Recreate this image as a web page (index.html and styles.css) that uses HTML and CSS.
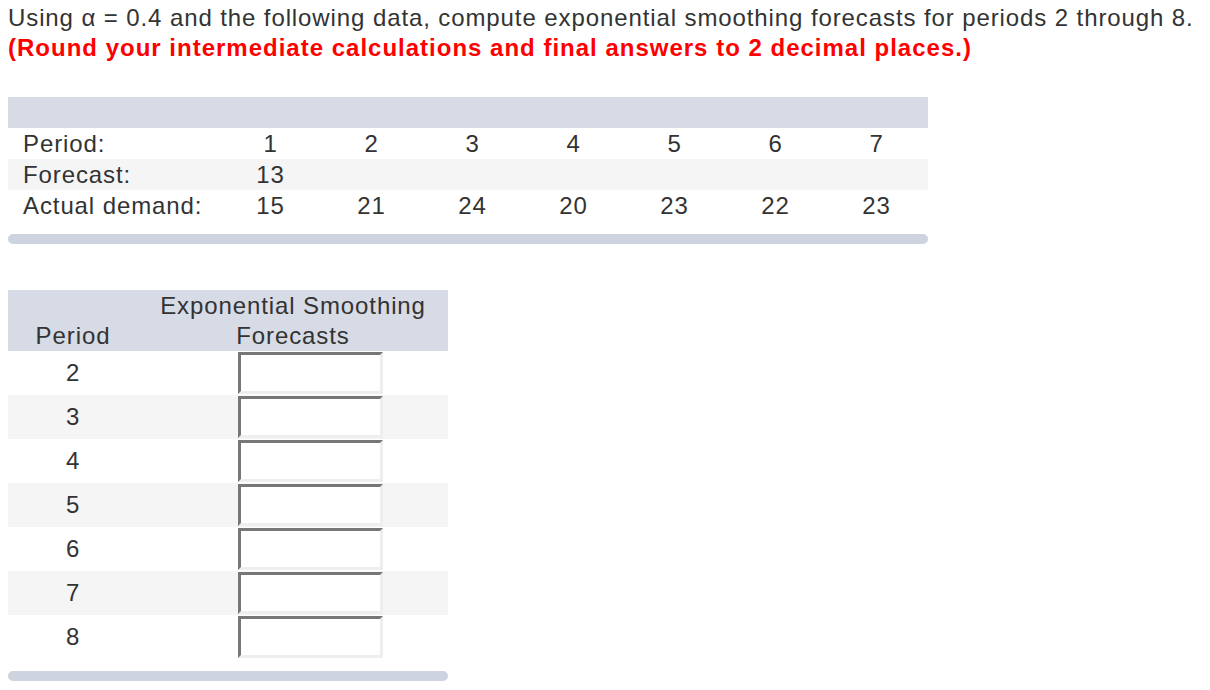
FILE: index.html
```html
<!DOCTYPE html>
<html>
<head>
<meta charset="utf-8">
<link rel="stylesheet" href="styles.css">
</head>
<body>
<div class="question">
  <div class="line">Using α = 0.4 and the following data, compute exponential smoothing forecasts for periods 2 through 8.</div>
  <div class="line red">(Round your intermediate calculations and final answers to 2 decimal places.)</div>
</div>

<div class="data">
  <div class="band"></div>
  <div class="drow">
    <div class="lab">Period:</div>
    <div class="num">1</div><div class="num">2</div><div class="num">3</div><div class="num">4</div><div class="num">5</div><div class="num">6</div><div class="num">7</div>
  </div>
  <div class="drow alt">
    <div class="lab">Forecast:</div>
    <div class="num">13</div><div class="num"></div><div class="num"></div><div class="num"></div><div class="num"></div><div class="num"></div><div class="num"></div>
  </div>
  <div class="drow">
    <div class="lab">Actual demand:</div>
    <div class="num">15</div><div class="num">21</div><div class="num">24</div><div class="num">20</div><div class="num">23</div><div class="num">22</div><div class="num">23</div>
  </div>
  <div class="bar"></div>
</div>

<div class="answers">
  <div class="ahead">
    <div class="pcol">Period</div>
    <div class="fcol">Exponential Smoothing<br>Forecasts</div>
  </div>
  <div class="arow"><div class="pcol">2</div><div class="fcol"><input type="text" class="box"></div></div>
  <div class="arow alt"><div class="pcol">3</div><div class="fcol"><input type="text" class="box"></div></div>
  <div class="arow"><div class="pcol">4</div><div class="fcol"><input type="text" class="box"></div></div>
  <div class="arow alt"><div class="pcol">5</div><div class="fcol"><input type="text" class="box"></div></div>
  <div class="arow"><div class="pcol">6</div><div class="fcol"><input type="text" class="box"></div></div>
  <div class="arow alt"><div class="pcol">7</div><div class="fcol"><input type="text" class="box"></div></div>
  <div class="arow"><div class="pcol">8</div><div class="fcol"><input type="text" class="box"></div></div>
  <div class="bar"></div>
</div>
</body>
</html>
```

FILE: styles.css
```css
html, body {
  margin: 0;
  padding: 0;
  background: #ffffff;
}
body {
  padding: 3px 8px 0 8px;
  font-family: "Liberation Sans", Arial, Helvetica, sans-serif;
  font-size: 24px;
  letter-spacing: 0.9px;
  color: #333333;
}
.question .line {
  line-height: 30px;
  white-space: nowrap;
}
.red {
  color: #ff0000;
  font-weight: bold;
  letter-spacing: 1px;
}
.data {
  width: 920px;
  margin-top: 34px;
}
.band {
  height: 31px;
  background: #d6dbe5;
}
.drow {
  display: flex;
  height: 31px;
  line-height: 31px;
}
.drow.alt, .arow.alt {
  background: #f5f5f5;
}
.lab {
  width: 197px;
  padding-left: 15px;
  white-space: nowrap;
}
.num {
  width: 101px;
  text-align: center;
}
.bar {
  height: 10px;
  border-radius: 5px;
  background: #cdd4e0;
}
.data .bar {
  margin-top: 13px;
}
.answers {
  width: 440px;
  margin-top: 46px;
}
.ahead {
  display: flex;
  align-items: flex-end;
  height: 61px;
  background: #d6dbe5;
  line-height: 30px;
}
.ahead .fcol {
  text-align: center;
  white-space: nowrap;
}
.pcol {
  flex: 0 0 130px;
  text-align: center;
}
.fcol {
  flex: 0 0 310px;
  box-sizing: border-box;
}
.arow {
  display: flex;
  height: 44px;
  align-items: center;
}
.arow .pcol {
  line-height: 44px;
}
.arow .fcol {
  display: flex;
  padding-left: 100px;
}
.box {
  box-sizing: border-box;
  width: 145px;
  height: 42px;
  margin: 0;
  padding: 0;
  border-style: solid;
  border-width: 3px;
  border-color: #777777 #eeeeee #eeeeee #777777;
  background: #ffffff;
  outline: none;
}
.answers .bar {
  margin-top: 12px;
}
```
